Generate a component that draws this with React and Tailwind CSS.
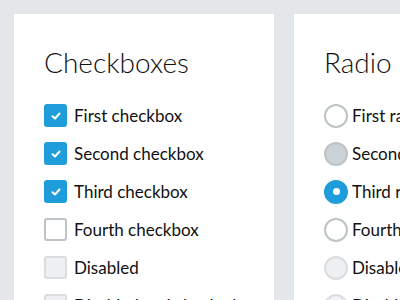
import React from "react";

const font = { fontFamily: "Lato, 'Noto Sans', sans-serif" };

function Check() {
  return (
    <svg width="12" height="12" viewBox="0 0 12 12" className="block">
      <path d="M2.5 6.2 L5 8.5 L9.5 3.5" fill="none" stroke="white" strokeWidth="2" strokeLinecap="round" strokeLinejoin="round" />
    </svg>
  );
}

function CheckboxRow({ label, state }) {
  let box;
  if (state === "checked") {
    box = <div className="w-[23px] h-[23px] shrink-0 rounded-[3px] bg-[#1f9ddb] flex items-center justify-center"><Check /></div>;
  } else if (state === "disabled") {
    box = <div className="w-[23px] h-[23px] shrink-0 rounded-[3px] bg-[#eef0f1] border-2 border-[#d9dde0]"></div>;
  } else if (state === "disabledChecked") {
    box = <div className="w-[23px] h-[23px] shrink-0 rounded-[3px] bg-[#eef0f1] border-2 border-[#d9dde0]"></div>;
  } else {
    box = <div className="w-[23px] h-[23px] shrink-0 rounded-[3px] bg-white border-2 border-[#bcc4c8]"></div>;
  }
  return (
    <div className="flex items-center gap-[7px] h-[23px] whitespace-nowrap">
      {box}
      <span className="text-[17px] leading-[23px] text-[#111]">{label}</span>
    </div>
  );
}

function RadioRow({ label, state }) {
  let dot;
  if (state === "checked") {
    dot = <div className="w-[24px] h-[24px] shrink-0 rounded-full bg-[#1f9ddb] flex items-center justify-center"><div className="w-[7px] h-[7px] rounded-full bg-white"></div></div>;
  } else if (state === "hover") {
    dot = <div className="w-[24px] h-[24px] shrink-0 rounded-full bg-[#ccd2d6] border-2 border-[#bcc4c8]"></div>;
  } else if (state === "disabled") {
    dot = <div className="w-[24px] h-[24px] shrink-0 rounded-full bg-[#eef0f1] border-2 border-[#d9dde0]"></div>;
  } else {
    dot = <div className="w-[24px] h-[24px] shrink-0 rounded-full bg-white border-2 border-[#bcc4c8]"></div>;
  }
  return (
    <div className="flex items-center gap-[4px] h-[23px] whitespace-nowrap">
      {dot}
      <span className="text-[17px] leading-[23px] text-[#111]">{label}</span>
    </div>
  );
}

export default function App() {
  return (
    <div className="w-[400px] h-[300px] overflow-hidden bg-[#e4e7ea] flex gap-[20px] pl-[14px] pt-[14px]" style={font}>
      <div className="w-[260px] h-[400px] shrink-0 bg-white px-[30px] pt-[28px]">
        <h1 className="text-[28px] font-light text-[#111] leading-[40px]">Checkboxes</h1>
        <div className="mt-[22px] flex flex-col gap-[15px]">
          <CheckboxRow label="First checkbox" state="checked" />
          <CheckboxRow label="Second checkbox" state="checked" />
          <CheckboxRow label="Third checkbox" state="checked" />
          <CheckboxRow label="Fourth checkbox" state="empty" />
          <CheckboxRow label="Disabled" state="disabled" />
          <CheckboxRow label="Disabled and checked" state="disabledChecked" />
        </div>
      </div>
      <div className="w-[260px] h-[400px] shrink-0 bg-white px-[30px] pt-[28px]">
        <h1 className="text-[28px] font-light text-[#111] leading-[40px] whitespace-nowrap">Radio buttons</h1>
        <div className="mt-[22px] flex flex-col gap-[15px]">
          <RadioRow label="First radio" state="empty" />
          <RadioRow label="Second radio" state="hover" />
          <RadioRow label="Third radio" state="checked" />
          <RadioRow label="Fourth radio" state="empty" />
          <RadioRow label="Disabled" state="disabled" />
          <RadioRow label="Disabled and checked" state="disabled" />
        </div>
      </div>
    </div>
  );
}
